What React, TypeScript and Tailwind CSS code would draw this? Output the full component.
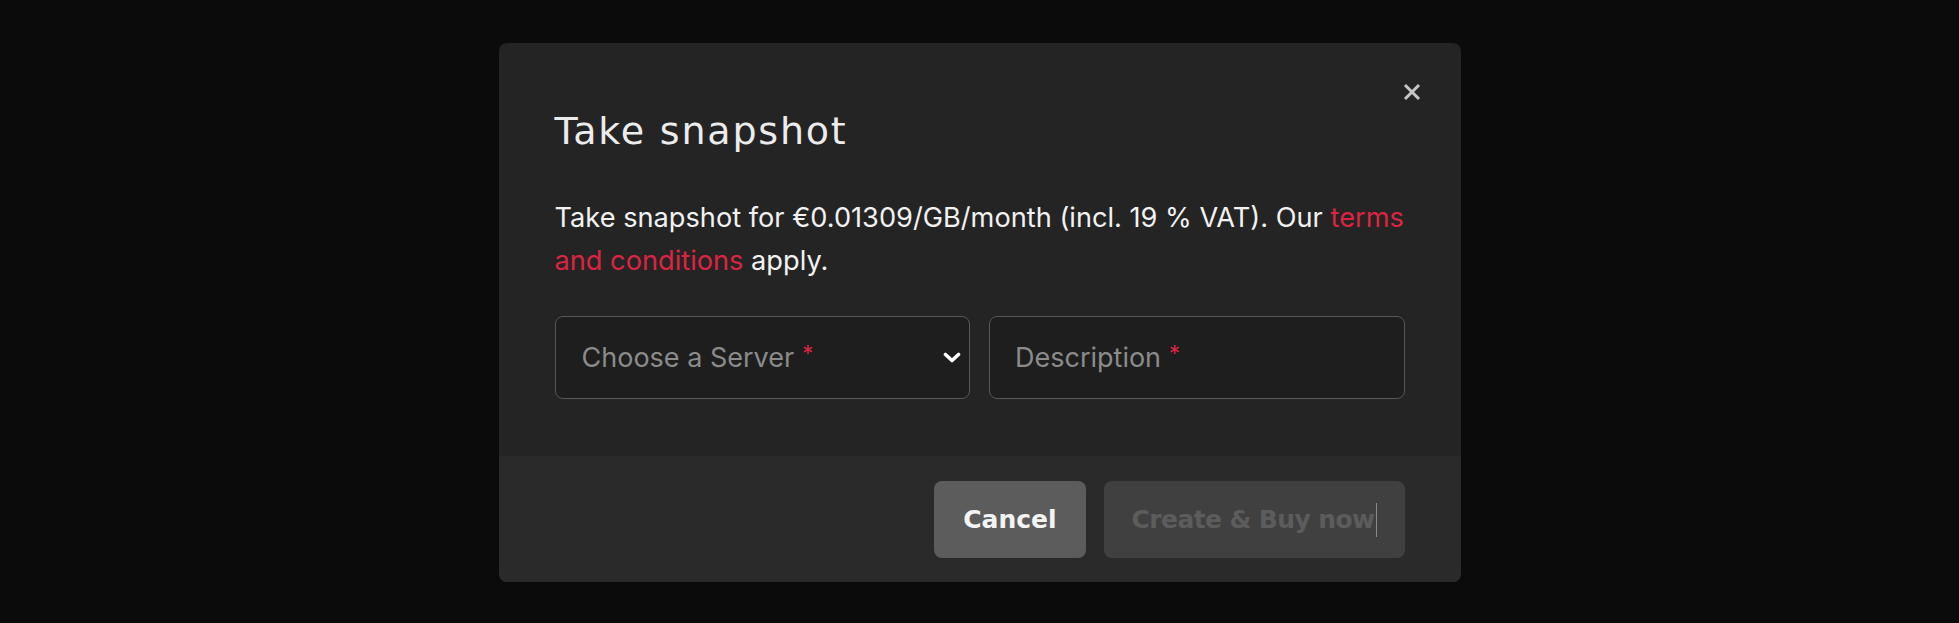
import React from "react";

function CloseIcon() {
  return (
    <svg width="18" height="18" viewBox="0 0 18 18" fill="none">
      <path d="M2 2 L16 16 M16 2 L2 16" stroke="#c6c6c6" strokeWidth="3" strokeLinecap="butt" />
    </svg>
  );
}

function Chevron() {
  return (
    <svg width="18" height="11" viewBox="0 0 18 11" fill="none">
      <polyline points="2.5,2.5 9,8.5 15.5,2.5" stroke="#ffffff" strokeWidth="3.6" strokeLinecap="round" strokeLinejoin="round" fill="none" />
    </svg>
  );
}

export default function App() {
  return (
    <div className="w-full h-[623px] bg-[#0b0b0b] flex justify-center pt-[43px]">
      <div className="relative w-[962px] self-start rounded-[8px] overflow-hidden bg-[#242424]">
        <button className="absolute right-[40px] top-[40px] w-[18px] h-[18px] flex items-center justify-center">
          <CloseIcon />
        </button>
        <div className="px-[56px] pt-[66px] pb-[57px]">
          <h2 className="font-['DejaVu_Sans',sans-serif] text-[38px] leading-[44px] tracking-[1.8px] text-[#ececec] font-normal">
            Take snapshot
          </h2>
          <p className="mt-[43px] font-['Inter',sans-serif] text-[27.2px] leading-[43px] text-[#f2f2f2]">
            Take snapshot for €0.01309/GB/month (incl. 19 % VAT). Our{" "}
            <span className="text-[#dc2442]">terms and conditions</span> apply.
          </p>
          <div className="mt-[34px] grid grid-cols-2 gap-[19px]">
            <div className="min-w-0 h-[83px] rounded-[8px] border border-[#575757] bg-[#1e1e1e] flex items-center pl-[26px] pr-[8px]">
              <span className="flex-1 flex items-start font-['Inter',sans-serif] text-[27px] leading-[36px] text-[#8b8b8b]">
                Choose a Server
                <span className="ml-[8px] text-[#dc2442] text-[22px] leading-[22px] mt-[2px]">*</span>
              </span>
              <Chevron />
            </div>
            <div className="min-w-0 h-[83px] rounded-[8px] border border-[#575757] bg-[#1e1e1e] flex items-center pl-[25px]">
              <span className="flex items-start font-['Inter',sans-serif] text-[27px] leading-[36px] text-[#8b8b8b]">
                Description
                <span className="ml-[8px] text-[#dc2442] text-[22px] leading-[22px] mt-[2px]">*</span>
              </span>
            </div>
          </div>
        </div>
        <div className="bg-[#2a2a2a] flex justify-end gap-[18px] px-[56px] pt-[25px] pb-[24px]">
          <button className="h-[77px] rounded-[8px] bg-[#5c5c5c] px-[29px] font-['DejaVu_Sans',sans-serif] font-bold text-[25px] text-[#f4f4f4]">
            Cancel
          </button>
          <button className="h-[77px] rounded-[8px] bg-[#414041] px-[28px] flex items-center font-['DejaVu_Sans',sans-serif] font-bold text-[25px] tracking-[-0.6px] text-[#5c5c5c]">
            Create &amp; Buy now
            <span className="ml-[1px] w-[1px] h-[34px] bg-[#8a8a8a]"></span>
          </button>
        </div>
      </div>
    </div>
  );
}
